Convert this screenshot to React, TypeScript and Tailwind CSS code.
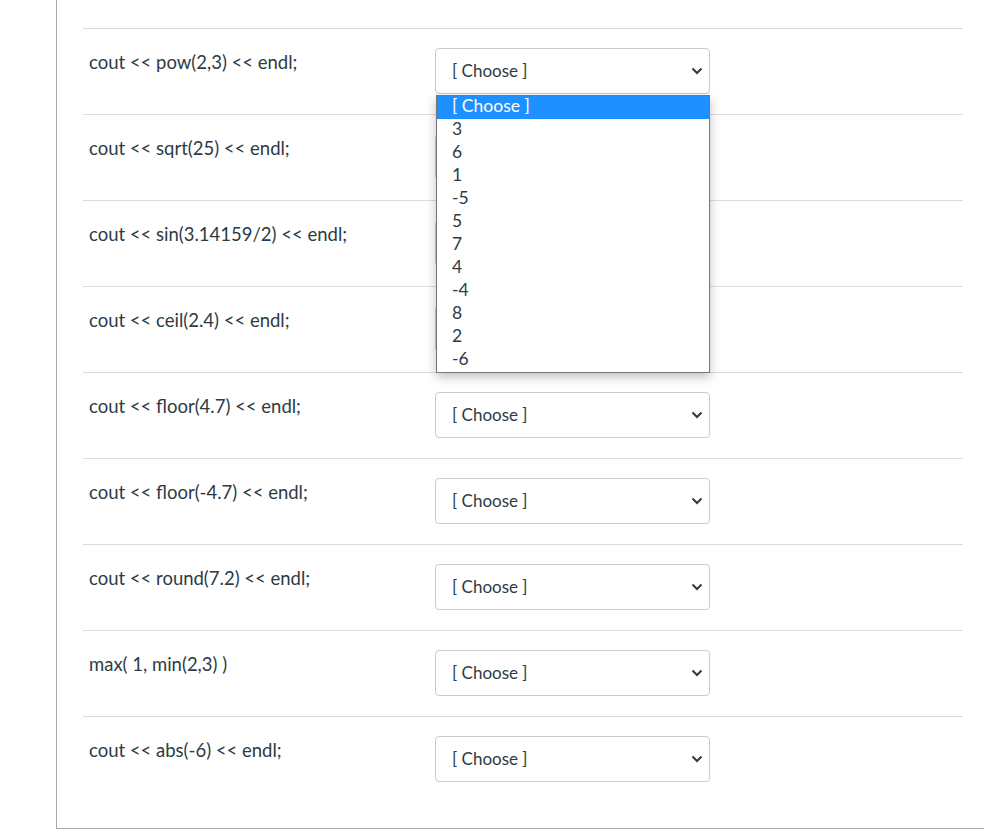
import React from 'react';

const questions = [
  'cout << pow(2,3) << endl;',
  'cout << sqrt(25) << endl;',
  'cout << sin(3.14159/2) << endl;',
  'cout << ceil(2.4) << endl;',
  'cout << floor(4.7) << endl;',
  'cout << floor(-4.7) << endl;',
  'cout << round(7.2) << endl;',
  'max( 1, min(2,3) )',
  'cout << abs(-6) << endl;',
];

const options = ['[ Choose ]', '3', '6', '1', '-5', '5', '7', '4', '-4', '8', '2', '-6'];

function Chevron() {
  return (
    <svg width="12" height="8" viewBox="0 0 12 8" className="text-[#2d3b45]">
      <path d="M1.5 1.5 L6 6 L10.5 1.5" fill="none" stroke="currentColor" strokeWidth="2" />
    </svg>
  );
}

function SelectBox({ open }: { open?: boolean }) {
  return (
    <div className="relative">
      <div className="flex h-[46px] w-[275px] items-center justify-between rounded border border-[#c7cdd1] bg-white pl-[16px] pr-[6px] text-[17px] text-[#2d3b45]">
        <span>[ Choose ]</span>
        <Chevron />
      </div>
      {open && (
        <div className="absolute left-[1px] top-[47px] z-10 w-[274px] border border-[#767676] bg-white shadow-[0_4px_10px_rgba(0,0,0,0.25)]">
          {options.map((o, i) => (
            <div
              key={o}
              className={`h-[23px] pl-[15px] text-[17.5px] leading-[20px] ${
                i === 0 ? 'bg-[#1e90ff] text-white' : 'text-[#2d3b45]'
              }`}
            >
              {o}
            </div>
          ))}
        </div>
      )}
    </div>
  );
}

export default function App() {
  return (
    <div className="min-h-[834px] overflow-hidden bg-white" style={{ fontFamily: 'Lato, "Liberation Sans", sans-serif' }}>
      <div className="ml-[56px] w-[1000px] border-b border-l border-[#a8a8a8] pb-[26px] pl-[26px] pt-[28px]">
        <div className="w-[880px]">
          {questions.map((q, i) => (
            <div key={i} className="flex items-start border-t border-[#dcdcdc] pb-[20px] pt-[19px]">
              <div className="w-[352px] pl-[6px] pt-[1px] text-[18.5px] leading-[26px] text-[#2d3b45]">{q}</div>
              <SelectBox open={i === 0} />
            </div>
          ))}
        </div>
      </div>
    </div>
  );
}
